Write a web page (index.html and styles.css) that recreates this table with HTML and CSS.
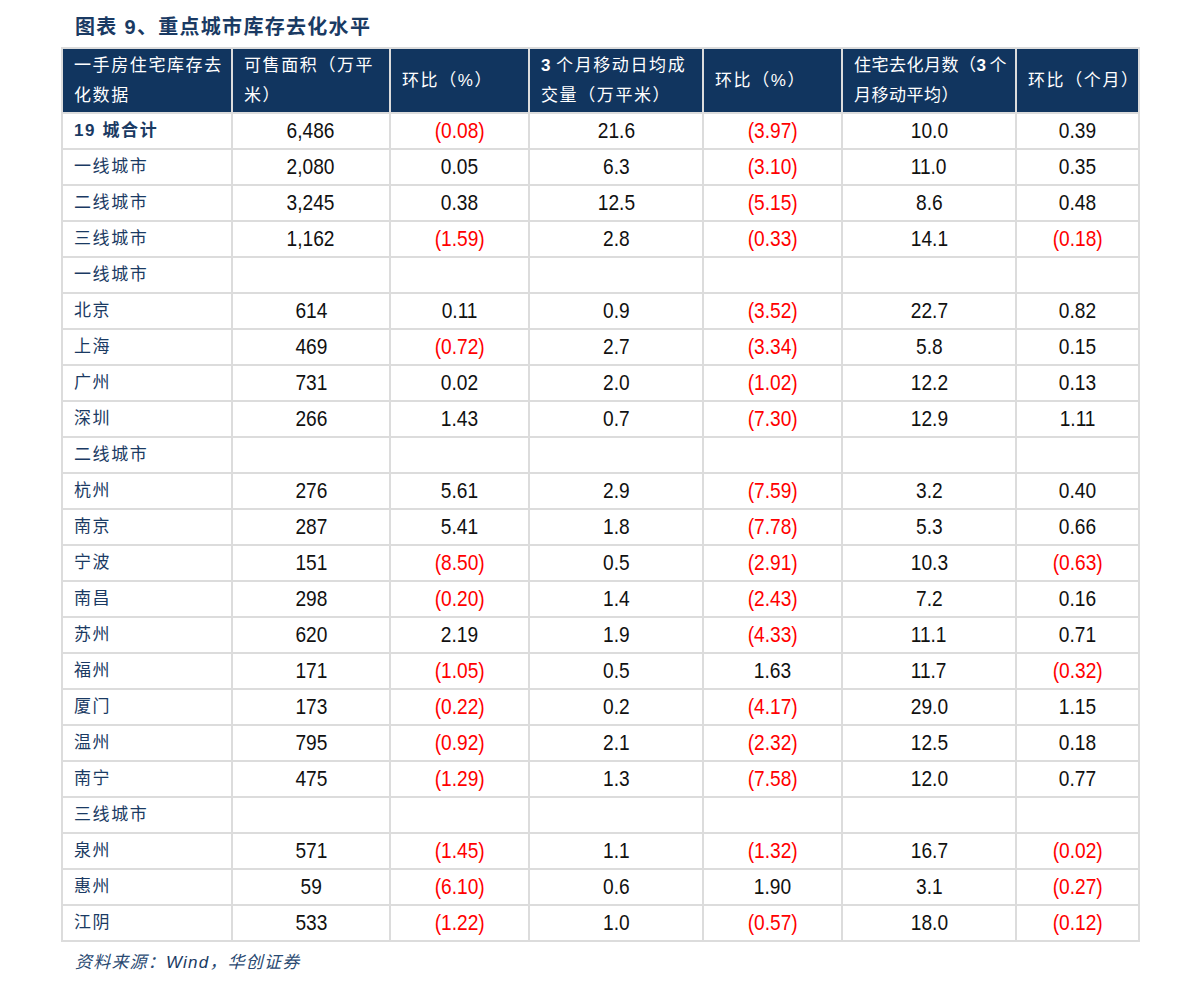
FILE: index.html
```html
<!DOCTYPE html>
<html lang="zh">
<head>
<meta charset="utf-8">
<link rel="stylesheet" href="styles.css">
</head>
<body>
<div class="wrap">
  <h1 class="title">图表 9、重点城市库存去化水平</h1>
  <table class="tbl">
    <colgroup>
      <col class="c1"><col class="c2"><col class="c3"><col class="c4"><col class="c5"><col class="c6"><col class="c7">
    </colgroup>
    <thead>
      <tr>
        <th>一手房住宅库存去化数据</th>
        <th>可售面积（万平米）</th>
        <th>环比（%）</th>
        <th><b class="num-b">3</b>个月移动日均成交量（万平米）</th>
        <th>环比（%）</th>
        <th class="tight">住宅去化月数（<b class="num-b">3</b>个月移动平均）</th>
        <th>环比（个月）</th>
      </tr>
    </thead>
    <tbody>
      <tr><td class="name strong">19 城合计</td><td><span class="n">6,486</span></td><td class="neg"><span class="n">(0.08)</span></td><td><span class="n">21.6</span></td><td class="neg"><span class="n">(3.97)</span></td><td><span class="n">10.0</span></td><td><span class="n">0.39</span></td></tr>
      <tr><td class="name">一线城市</td><td><span class="n">2,080</span></td><td><span class="n">0.05</span></td><td><span class="n">6.3</span></td><td class="neg"><span class="n">(3.10)</span></td><td><span class="n">11.0</span></td><td><span class="n">0.35</span></td></tr>
      <tr><td class="name">二线城市</td><td><span class="n">3,245</span></td><td><span class="n">0.38</span></td><td><span class="n">12.5</span></td><td class="neg"><span class="n">(5.15)</span></td><td><span class="n">8.6</span></td><td><span class="n">0.48</span></td></tr>
      <tr><td class="name">三线城市</td><td><span class="n">1,162</span></td><td class="neg"><span class="n">(1.59)</span></td><td><span class="n">2.8</span></td><td class="neg"><span class="n">(0.33)</span></td><td><span class="n">14.1</span></td><td class="neg"><span class="n">(0.18)</span></td></tr>
      <tr><td class="name">一线城市</td><td></td><td></td><td></td><td></td><td></td><td></td></tr>
      <tr><td class="name">北京</td><td><span class="n">614</span></td><td><span class="n">0.11</span></td><td><span class="n">0.9</span></td><td class="neg"><span class="n">(3.52)</span></td><td><span class="n">22.7</span></td><td><span class="n">0.82</span></td></tr>
      <tr><td class="name">上海</td><td><span class="n">469</span></td><td class="neg"><span class="n">(0.72)</span></td><td><span class="n">2.7</span></td><td class="neg"><span class="n">(3.34)</span></td><td><span class="n">5.8</span></td><td><span class="n">0.15</span></td></tr>
      <tr><td class="name">广州</td><td><span class="n">731</span></td><td><span class="n">0.02</span></td><td><span class="n">2.0</span></td><td class="neg"><span class="n">(1.02)</span></td><td><span class="n">12.2</span></td><td><span class="n">0.13</span></td></tr>
      <tr><td class="name">深圳</td><td><span class="n">266</span></td><td><span class="n">1.43</span></td><td><span class="n">0.7</span></td><td class="neg"><span class="n">(7.30)</span></td><td><span class="n">12.9</span></td><td><span class="n">1.11</span></td></tr>
      <tr><td class="name">二线城市</td><td></td><td></td><td></td><td></td><td></td><td></td></tr>
      <tr><td class="name">杭州</td><td><span class="n">276</span></td><td><span class="n">5.61</span></td><td><span class="n">2.9</span></td><td class="neg"><span class="n">(7.59)</span></td><td><span class="n">3.2</span></td><td><span class="n">0.40</span></td></tr>
      <tr><td class="name">南京</td><td><span class="n">287</span></td><td><span class="n">5.41</span></td><td><span class="n">1.8</span></td><td class="neg"><span class="n">(7.78)</span></td><td><span class="n">5.3</span></td><td><span class="n">0.66</span></td></tr>
      <tr><td class="name">宁波</td><td><span class="n">151</span></td><td class="neg"><span class="n">(8.50)</span></td><td><span class="n">0.5</span></td><td class="neg"><span class="n">(2.91)</span></td><td><span class="n">10.3</span></td><td class="neg"><span class="n">(0.63)</span></td></tr>
      <tr><td class="name">南昌</td><td><span class="n">298</span></td><td class="neg"><span class="n">(0.20)</span></td><td><span class="n">1.4</span></td><td class="neg"><span class="n">(2.43)</span></td><td><span class="n">7.2</span></td><td><span class="n">0.16</span></td></tr>
      <tr><td class="name">苏州</td><td><span class="n">620</span></td><td><span class="n">2.19</span></td><td><span class="n">1.9</span></td><td class="neg"><span class="n">(4.33)</span></td><td><span class="n">11.1</span></td><td><span class="n">0.71</span></td></tr>
      <tr><td class="name">福州</td><td><span class="n">171</span></td><td class="neg"><span class="n">(1.05)</span></td><td><span class="n">0.5</span></td><td><span class="n">1.63</span></td><td><span class="n">11.7</span></td><td class="neg"><span class="n">(0.32)</span></td></tr>
      <tr><td class="name">厦门</td><td><span class="n">173</span></td><td class="neg"><span class="n">(0.22)</span></td><td><span class="n">0.2</span></td><td class="neg"><span class="n">(4.17)</span></td><td><span class="n">29.0</span></td><td><span class="n">1.15</span></td></tr>
      <tr><td class="name">温州</td><td><span class="n">795</span></td><td class="neg"><span class="n">(0.92)</span></td><td><span class="n">2.1</span></td><td class="neg"><span class="n">(2.32)</span></td><td><span class="n">12.5</span></td><td><span class="n">0.18</span></td></tr>
      <tr><td class="name">南宁</td><td><span class="n">475</span></td><td class="neg"><span class="n">(1.29)</span></td><td><span class="n">1.3</span></td><td class="neg"><span class="n">(7.58)</span></td><td><span class="n">12.0</span></td><td><span class="n">0.77</span></td></tr>
      <tr><td class="name">三线城市</td><td></td><td></td><td></td><td></td><td></td><td></td></tr>
      <tr><td class="name">泉州</td><td><span class="n">571</span></td><td class="neg"><span class="n">(1.45)</span></td><td><span class="n">1.1</span></td><td class="neg"><span class="n">(1.32)</span></td><td><span class="n">16.7</span></td><td class="neg"><span class="n">(0.02)</span></td></tr>
      <tr><td class="name">惠州</td><td><span class="n">59</span></td><td class="neg"><span class="n">(6.10)</span></td><td><span class="n">0.6</span></td><td><span class="n">1.90</span></td><td><span class="n">3.1</span></td><td class="neg"><span class="n">(0.27)</span></td></tr>
      <tr><td class="name">江阴</td><td><span class="n">533</span></td><td class="neg"><span class="n">(1.22)</span></td><td><span class="n">1.0</span></td><td class="neg"><span class="n">(0.57)</span></td><td><span class="n">18.0</span></td><td class="neg"><span class="n">(0.12)</span></td></tr>
    </tbody>
  </table>
  <p class="source">资料来源：<span class="src-en">Wind</span>，华创证券</p>
</div>
</body>
</html>
```

FILE: styles.css
```css
html, body {
  margin: 0;
  padding: 0;
  background: #ffffff;
}

body {
  font-family: "Liberation Sans", "Noto Sans CJK SC", sans-serif;
}

.wrap {
  padding: 14px 0 0 61px;
  width: 1077px;
}

.title {
  margin: 0 0 7px 14px;
  font-size: 20px;
  line-height: 26px;
  font-weight: bold;
  color: #1a3a63;
  letter-spacing: 1.3px;
  font-family: "Liberation Sans", "Noto Sans CJK SC", sans-serif;
}

.tbl {
  border-collapse: collapse;
  table-layout: fixed;
  width: 1077px;
  border: 2px solid #dcdcdc;
}

.c1 { width: 170px; }
.c2 { width: 158px; }
.c3 { width: 139px; }
.c4 { width: 174px; }
.c5 { width: 139px; }
.c6 { width: 174px; }
.c7 { width: 123px; }

.tbl th {
  background: #11355f;
  color: #ffffff;
  font-weight: normal;
  font-size: 17px;
  line-height: 30px;
  letter-spacing: 1.6px;
  text-align: left;
  padding: 1px 6px 1px 11px;
  height: 61px;
  border: 2px solid #dcdcdc;
  vertical-align: middle;
  font-family: "Liberation Sans", "Noto Sans CJK SC", sans-serif;
}

.tbl th.tight {
  letter-spacing: 0.5px;
  padding-right: 0;
}

.num-b {
  font-weight: bold;
  margin-right: 4px;
}

.tight .num-b {
  margin-right: 3px;
}

.tbl td {
  height: 34px;
  padding: 0;
  border: 2px solid #dcdcdc;
  text-align: center;
  vertical-align: middle;
  color: #111111;
  font-size: 22px;
  line-height: 34px;
}

.tbl td.name {
  text-align: left;
  padding-left: 11px;
  color: #1a3a63;
  font-size: 17px;
  letter-spacing: 1.6px;
}

.tbl td.strong {
  font-weight: bold;
}

.tbl td.neg {
  color: #ff0000;
}

.n {
  display: inline-block;
  transform: scaleX(0.87);
}

.source {
  margin: 6px 0 0 14px;
  font-size: 17px;
  font-style: italic;
  color: #2a4a72;
  letter-spacing: 1.2px;
}

.src-en {
  color: #1a3a63;
}
```
